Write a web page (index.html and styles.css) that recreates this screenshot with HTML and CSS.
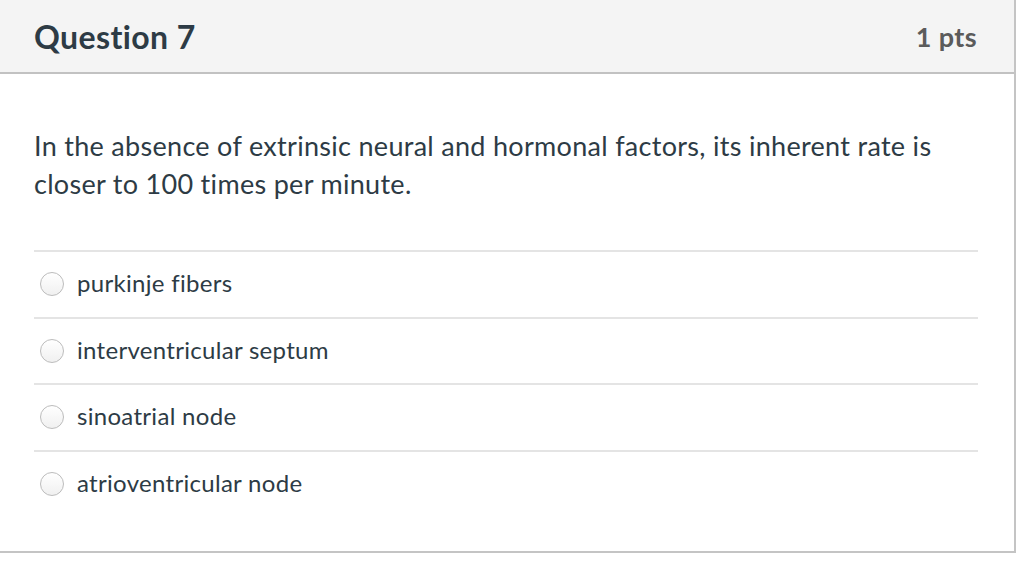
FILE: index.html
```html
<!DOCTYPE html>
<html>
<head>
<meta charset="utf-8">
<link rel="stylesheet" href="styles.css">
</head>
<body>
<div class="card">
  <div class="header">
    <div class="title">Question 7</div>
    <div class="pts">1 pts</div>
  </div>
  <div class="content">
    <p class="question">In the absence of extrinsic neural and hormonal factors, its inherent rate is closer to 100 times per minute.</p>
    <div class="answers">
      <label class="answer"><span class="radio"></span><span class="atext">purkinje fibers</span></label>
      <label class="answer"><span class="radio"></span><span class="atext">interventricular septum</span></label>
      <label class="answer"><span class="radio"></span><span class="atext">sinoatrial node</span></label>
      <label class="answer"><span class="radio"></span><span class="atext">atrioventricular node</span></label>
    </div>
  </div>
</div>
</body>
</html>
```

FILE: styles.css
```css
html, body {
  margin: 0;
  padding: 0;
  background: #ffffff;
}
body {
  font-family: Lato, "Open Sans", sans-serif;
  color: #2d3b45;
}
.card {
  width: 1014px;
  height: 551px;
  border-right: 2px solid #c4c4c4;
  border-bottom: 2px solid #c4c4c4;
  box-sizing: content-box;
}
.header {
  height: 72px;
  background: #f4f4f4;
  border-bottom: 2px solid #c2c2c2;
  display: flex;
  align-items: center;
  justify-content: space-between;
  padding: 0 37px 0 34px;
}
.title {
  font-weight: 700;
  font-size: 32px;
  letter-spacing: 0.4px;
  font-variant-ligatures: none;
  color: #2d3b45;
}
.pts {
  font-weight: 700;
  font-size: 27px;
  letter-spacing: 0.4px;
  color: #5b5b5b;
}
.content {
  padding: 53px 36px 0 34px;
}
.question {
  margin: 0;
  font-size: 27px;
  letter-spacing: 0.3px;
  line-height: 38px;
  font-variant-ligatures: none;
}
.answers {
  margin-top: 47px;
}
.answer {
  display: flex;
  align-items: center;
  height: 64.5px;
  border-top: 2px solid #e4e4e4;
}
.radio {
  width: 24px;
  height: 24px;
  margin-left: 6px;
  margin-right: 13px;
  border-radius: 50%;
  border: 1px solid #bcbcbc;
  background: linear-gradient(#ffffff, #f0f0f0);
  box-sizing: border-box;
}
.atext {
  font-size: 24px;
  letter-spacing: 0.3px;
  padding-bottom: 3px;
}
```
